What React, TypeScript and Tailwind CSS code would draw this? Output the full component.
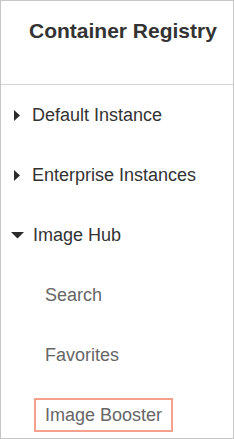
import { useState } from 'react'

type Item = { label: string; open: boolean }

const groups: Item[] = [
  { label: 'Default Instance', open: false },
  { label: 'Enterprise Instances', open: false },
  { label: 'Image Hub', open: true },
]

const hubLinks = ['Search', 'Favorites', 'Image Booster']

function Caret({ open }: { open: boolean }) {
  if (open) {
    return (
      <svg width="13" height="7" viewBox="0 0 13 7" className="shrink-0">
        <path d="M0 0 L13 0 L6.5 6.5 Z" fill="#2b2b2b" />
      </svg>
    )
  }
  return (
    <svg width="6" height="11" viewBox="0 0 6 11" className="shrink-0">
      <path d="M0 0 L6 5.5 L0 11 Z" fill="#2b2b2b" />
    </svg>
  )
}

function App() {
  const [active] = useState('Image Booster')

  return (
    <div
      className="w-[234px] h-[439px] border border-[#c6c6c6] bg-white overflow-hidden"
      style={{ fontFamily: '"Liberation Sans", Arial, sans-serif' }}
    >
      <div className="h-[84px] border-b border-[#d4d4d4] pl-[28px] pt-[18px]">
        <h1 className="text-[21px] leading-[24px] font-bold text-[#333] whitespace-nowrap">
          Container Registry
        </h1>
      </div>

      <nav className="flex flex-col">
        {groups.map((g) => (
          <div
            key={g.label}
            className={`h-[60px] flex items-center ${g.open ? 'pl-[10px] gap-[9px]' : 'pl-[13px] gap-[12px]'}`}
          >
            <Caret open={g.open} />
            <span className="text-[18px] text-[#333]">{g.label}</span>
          </div>
        ))}
        {hubLinks.map((l) => (
          <div key={l} className="h-[60px] flex items-center pl-[33px]">
            <span
              className={`text-[18px] leading-[28px] text-[#666] px-[9px] py-[1px] border-2 ${
                l === active ? 'border-[#f4a08c]' : 'border-transparent'
              }`}
            >
              {l}
            </span>
          </div>
        ))}
      </nav>
    </div>
  )
}

export default App
